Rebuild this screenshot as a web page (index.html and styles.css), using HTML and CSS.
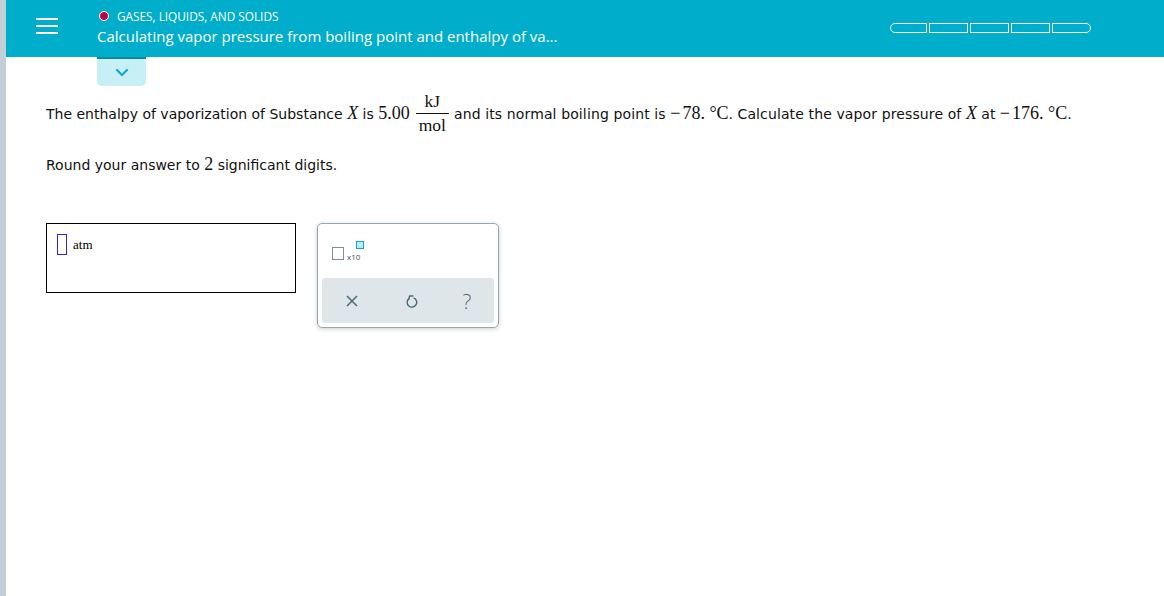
FILE: index.html
```html
<!DOCTYPE html>
<html>
<head>
<meta charset="utf-8">
<link rel="stylesheet" href="styles.css">
</head>
<body>
<div class="page">
  <div class="strip"></div>
  <div class="main">
    <header class="topbar">
      <div class="burger"><span></span><span></span><span></span></div>
      <div class="titles">
        <div class="topic"><span class="dot"></span>GASES, LIQUIDS, AND SOLIDS</div>
        <div class="title">Calculating vapor pressure from boiling point and enthalpy of va...</div>
      </div>
      <div class="progress">
        <span class="seg first"></span><span class="seg"></span><span class="seg"></span><span class="seg"></span><span class="seg last"></span>
      </div>
    </header>
    <div class="tabrow">
      <div class="tab">
        <svg width="14" height="9" viewBox="0 0 14 9"><path d="M2 2 L7 7 L12 2" fill="none" stroke="#1aa9c6" stroke-width="2.4" stroke-linecap="round" stroke-linejoin="round"/></svg>
      </div>
    </div>
    <div class="content">
      <p class="q">The enthalpy of vaporization of Substance <i class="m">X</i> is <span class="m">5.00</span><span class="frac"><span class="num">kJ</span><span class="den">mol</span></span><span class="wide">and its normal boiling point is</span> <span class="m"><span class="minus">−</span>78. °C</span>. <span class="wide">Calculate the vapor pressure of</span> <i class="m">X</i> at <span class="m"><span class="minus">−</span>176. °C</span>.</p>
      <p class="round">Round your answer to <span class="m">2</span> significant digits.</p>
      <div class="answer-row">
        <div class="answer">
          <span class="caret"></span><span class="unit">atm</span>
        </div>
        <div class="tools">
          <div class="tools-top">
            <div class="sci"><span class="box"></span><span class="x10">x10</span><span class="exp"></span></div>
          </div>
          <div class="tools-bar">
            <svg width="14" height="14" viewBox="0 0 14 14"><path d="M2 2 L12 12 M12 2 L2 12" stroke="#4a6a76" stroke-width="1.5" fill="none"/></svg>
            <svg width="14" height="16" viewBox="0 0 14 16"><path d="M4.9 5.6 A4.8 4.8 0 1 0 9.6 4.8" stroke="#4a6a76" stroke-width="1.4" fill="none"/><path d="M9 3 L5.6 3 L4.8 6.3" stroke="#4a6a76" stroke-width="1.4" fill="none" stroke-linecap="round" stroke-linejoin="round"/></svg>
            <span class="help">?</span>
          </div>
        </div>
      </div>
    </div>
  </div>
</div>
</body>
</html>
```
FILE: styles.css
```css
html, body { margin: 0; padding: 0; }
body { background: #fff; font-family: "DejaVu Sans", Verdana, sans-serif; }
.page { display: flex; width: 1164px; height: 596px; overflow: hidden; }
.strip { width: 6px; background: #c1d0d7; flex: none; }
.main { flex: 1; }
.topbar { height: 57px; background: #00aecb; display: flex; align-items: flex-start; }
.burger { width: 22px; margin: 18px 0 0 30px; display: flex; flex-direction: column; gap: 5px; }
.burger span { display: block; height: 2px; background: #fff; }
.titles { margin-left: 39px; padding-top: 8px; color: #fff; font-family: "Open Sans", sans-serif; }
.topic { font-size: 11.8px; display: flex; align-items: center; height: 16px; }
.dot { width: 10px; height: 10px; border-radius: 50%; background: #c60048; border: 1px solid #fff; box-sizing: border-box; margin: 0 8px 0 2px; }
.title { font-size: 15px; margin-top: 2px; }
.progress { margin-left: auto; margin-right: 73px; margin-top: 23px; display: flex; gap: 2px; }
.seg { width: 37px; height: 8px; border: 1px solid #fff; }
.seg.first { border-radius: 5px 0 0 5px; width: 35px; }
.seg.last { border-radius: 0 5px 5px 0; }
.tabrow { padding-left: 91px; }
.tab { width: 49px; height: 27px; background: #c6eff6; border-top: 2px solid #0a8aa0; border-radius: 0 0 5px 5px; display: flex; align-items: center; justify-content: center; }
.content { padding-left: 40px; color: #111; }
.q { margin: 7px 0 0; font-size: 14px; line-height: normal; white-space: nowrap; }
.wide { letter-spacing: 0.12px; }
.m { font-family: "Liberation Serif", "Times New Roman", serif; font-size: 18px; }
.minus { margin-right: 2px; }
i.m { font-style: italic; }
.frac { display: inline-block; vertical-align: -12px; margin: 0 5px 0 6px; font-family: "Liberation Serif", serif; font-size: 17.5px; line-height: 17px; text-align: center; }
.frac .num { display: block; border-bottom: 1px solid #111; padding: 0 3px 3px; }
.frac .den { display: block; padding: 3px 3px 0; }
.round { margin: 20px 0 0; font-size: 14px; }
.answer-row { display: flex; margin-top: 48px; gap: 21px; }
.answer { border: 1px solid #000; display: flex; align-items: flex-start; padding: 10px 0 0 10px; box-sizing: border-box; width: 250px; height: 70px; }
.caret { width: 8px; height: 19px; border: 1px solid #3a1fe0; }
.unit { font-family: "Liberation Serif", serif; font-size: 13px; margin-left: 6px; margin-top: 3px; color: #000; }
.tools { width: 182px; height: 105px; border: 1px solid #8fa9b1; border-radius: 5px; box-shadow: 0 1px 4px rgba(0,0,0,0.2); box-sizing: border-box; padding: 0 4px 4px; display: flex; flex-direction: column; }
.tools-top { height: 54px; position: relative; }
.sci { position: absolute; left: 6px; top: 15px; width: 44px; height: 26px; }
.sci .box { position: absolute; left: 4px; top: 8px; width: 10px; height: 11px; border: 1.5px solid #7b9099; }
.sci .x10 { position: absolute; left: 19px; top: 13px; font-family: "Open Sans", sans-serif; font-size: 8px; line-height: 10px; color: #3a4f58; }
.sci .exp { position: absolute; left: 28px; top: 2px; width: 6px; height: 6px; border: 1.5px solid #1aa4bd; background: #b8ecf4; }
.tools-bar { flex: 1; background: #dfe6e9; border-radius: 3px; display: flex; align-items: center; justify-content: space-around; }
.help { font-family: "Open Sans", sans-serif; font-size: 21px; color: #4a6a76; font-weight: 300; }
```
